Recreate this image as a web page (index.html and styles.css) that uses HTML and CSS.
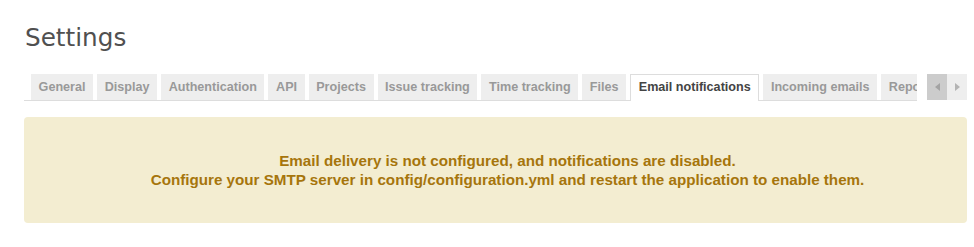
FILE: index.html
```html
<!DOCTYPE html>
<html lang="en">
<head>
  <meta charset="UTF-8">
  <title>Settings</title>
  <link rel="stylesheet" href="styles.css">
</head>
<body>

<div class="content">
  <h2>Settings</h2>

  <div class="tabs">
    <ul>
      <li><a href="#">General</a></li>
      <li><a href="#">Display</a></li>
      <li><a href="#">Authentication</a></li>
      <li><a href="#">API</a></li>
      <li><a href="#">Projects</a></li>
      <li><a href="#">Issue tracking</a></li>
      <li><a href="#">Time tracking</a></li>
      <li><a href="#">Files</a></li>
      <li><a href="#" class="selected">Email notifications</a></li>
      <li><a href="#">Incoming emails</a></li>
      <li><a href="#">Repositories</a></li>
    </ul>
    <div class="tab-buttons">
      <button class="tab-left">
        <svg width="5" height="8" viewBox="0 0 5 8"><polygon points="5,0 5,8 0,4" /></svg>
      </button>
      <button class="tab-right">
        <svg width="5" height="8" viewBox="0 0 5 8"><polygon points="0,0 0,8 5,4" /></svg>
      </button>
    </div>
  </div>

  <div class="flash warning">
    Email delivery is not configured, and notifications are disabled.<br>
    Configure your SMTP server in config/configuration.yml and restart the application to enable them.
  </div>
</div>

</body>
</html>
```

FILE: styles.css
```css
html, body {
  margin: 0;
  padding: 0;
  background: #fff;
  font-family: "Liberation Sans", Arial, sans-serif;
}

.content {
  padding: 0 7px 0 24px;
}

h2 {
  margin: 24px 0 0 1px;
  font-family: "DejaVu Sans", sans-serif;
  font-size: 24.7px;
  font-weight: normal;
  line-height: 28px;
  color: #505050;
}

/* tabs */
.tabs {
  display: flex;
  margin-top: 22px;
  height: 27px;
}

.tabs ul {
  flex: 1;
  display: flex;
  gap: 4px;
  margin: 0;
  padding: 0 0 0 7px;
  list-style: none;
  overflow: hidden;
  height: 27px;
  box-shadow: inset 0 -1px #dddddd;
}

.tabs li {
  flex-shrink: 0;
}

.tabs a {
  display: block;
  padding: 0 7.6px;
  height: 26px;
  line-height: 26px;
  background: #eeeeee;
  color: #999999;
  font-size: 12.6px;
  font-weight: bold;
  text-decoration: none;
  white-space: nowrap;
}

.tabs a.selected {
  background: #fff;
  color: #444;
  border: 1px solid #dddddd;
  border-bottom: 0;
  height: 26px;
  line-height: 25px;
}

.tab-buttons {
  display: flex;
  margin-left: 10px;
}

.tab-buttons button {
  width: 20px;
  height: 26px;
  padding: 0;
  border: none;
  display: flex;
  align-items: center;
  justify-content: center;
  cursor: pointer;
}

.tab-left {
  background: #cccccc;
  fill: #a3a3a3;
}

.tab-right {
  background: #eeeeee;
  fill: #b4b4b4;
}

/* flash */
.flash {
  margin-top: 16px;
  padding: 34px 6px 34px 30px;
  border-radius: 4px;
  text-align: center;
  font-size: 15.2px;
  font-weight: bold;
  line-height: 19px;
}

.flash.warning {
  background-color: #f3edd1;
  color: #a6750c;
}
```
